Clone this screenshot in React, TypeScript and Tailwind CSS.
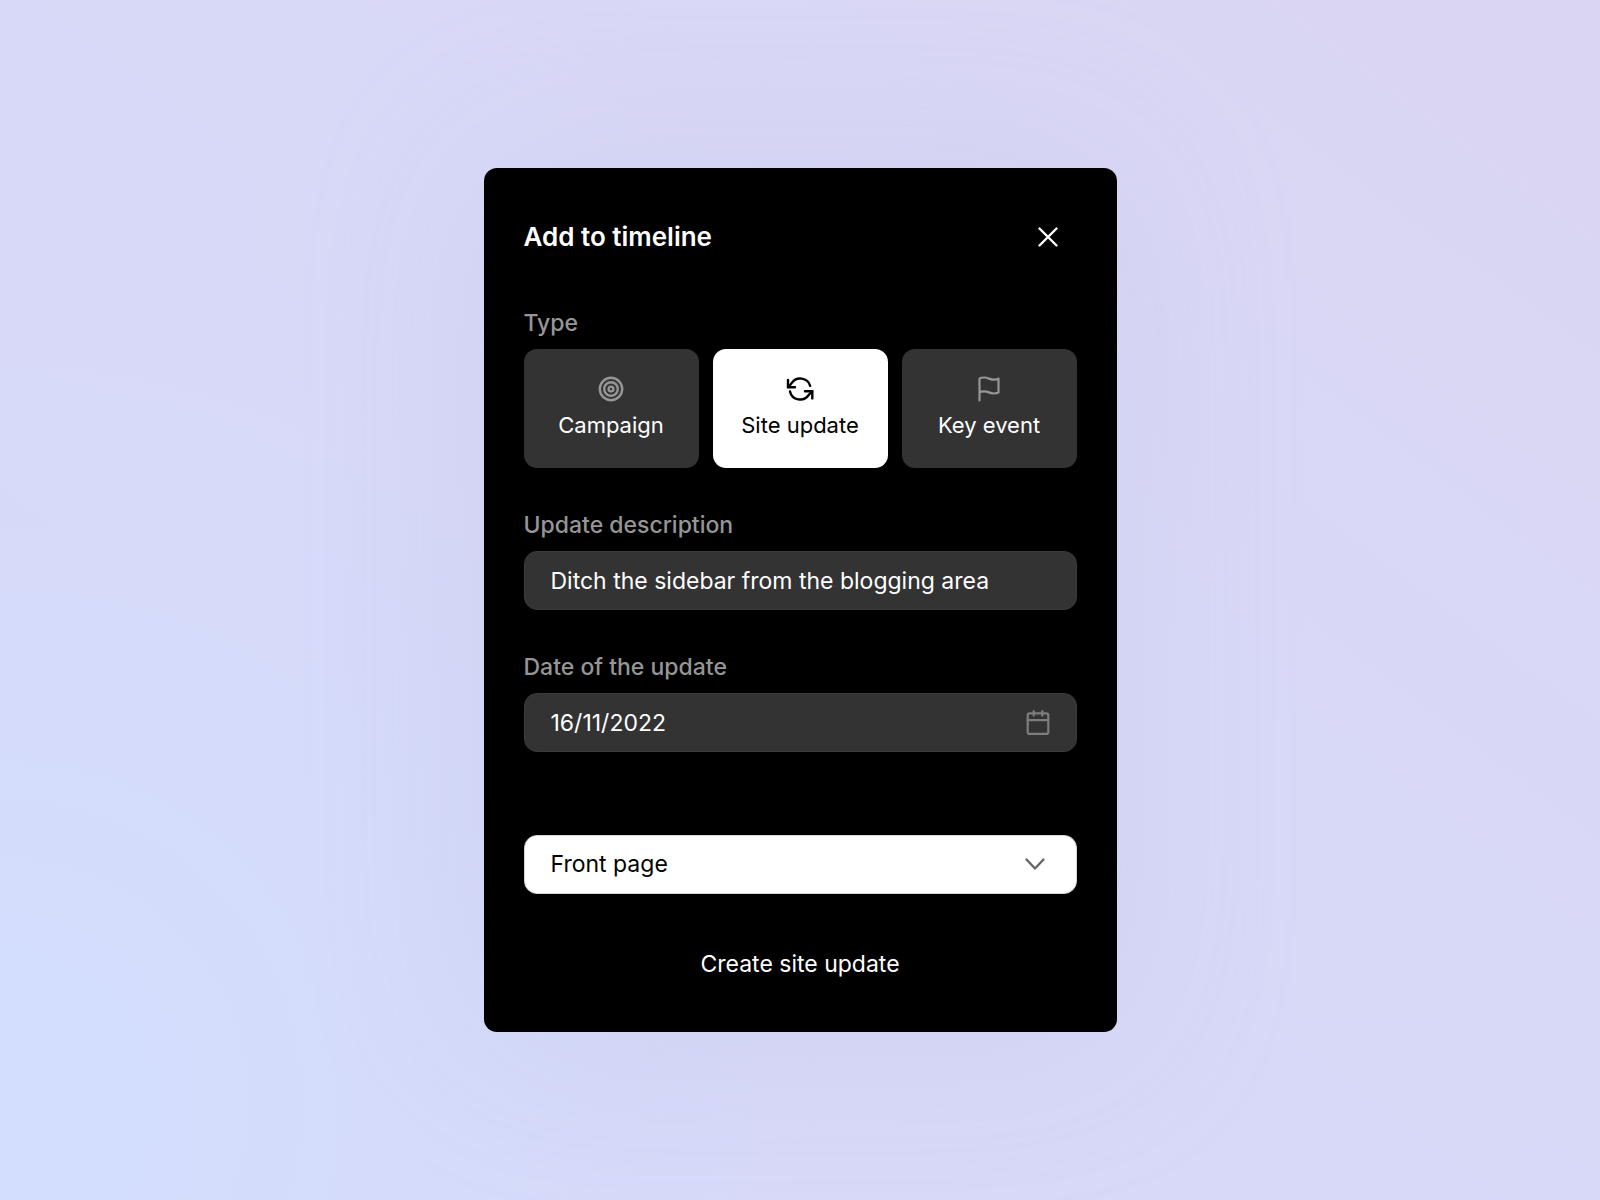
import React, { useState } from 'react';

type IconProps = { className?: string };

const stroke = {
  fill: 'none',
  stroke: 'currentColor',
  strokeLinecap: 'round' as const,
  strokeLinejoin: 'round' as const,
  'aria-hidden': true,
};

function TargetIcon({ className }: IconProps) {
  return (
    <svg viewBox="0 0 28 28" className={className} {...stroke} strokeWidth={2.4}>
      <circle cx="14" cy="14" r="11.2" />
      <circle cx="14" cy="14" r="6.8" />
      <circle cx="14" cy="14" r="2.4" />
    </svg>
  );
}

function RefreshIcon({ className }: IconProps) {
  return (
    <svg viewBox="0 0 28 28" className={className} {...stroke} strokeWidth={2.4}>
      <path d="M2 5v7.200h7" />
      <path d="M26.300 23.400v-7.200h-7.300" />
      <path d="M24.200 10.800A10.400 10.400 0 0 0 5.600 8.200L2 12.200" />
      <path d="M4 16.400a10.400 10.400 0 0 0 18.700 3.600l3.600-3.800" />
    </svg>
  );
}

function FlagIcon({ className }: IconProps) {
  return (
    <svg viewBox="0 0 28 28" className={className} {...stroke} strokeWidth={2.2}>
      <path d="M4.500 25.500V3.600s1.200-1.100 4.800-1.100 5.900 2.200 9.500 2.200 4.700-1.100 4.700-1.100v13.800s-1.100 1.100-4.700 1.100-5.900-2.200-9.500-2.200-4.800 1.100-4.800 1.100" />
    </svg>
  );
}

function CalendarIcon({ className }: IconProps) {
  return (
    <svg viewBox="0 0 28 28" className={className} {...stroke} strokeWidth={2.2}>
      <rect x="3.700" y="4.300" width="20.600" height="20.600" rx="2" />
      <path d="M3.700 11.200h20.600M9.700 2v4.600M18.300 2v4.600" />
    </svg>
  );
}

function CloseIcon({ className }: IconProps) {
  return (
    <svg viewBox="0 0 28 28" className={className} {...stroke} strokeWidth={2.4}>
      <path d="M5.500 5.500l17 17M22.500 5.500l-17 17" />
    </svg>
  );
}

function ChevronIcon({ className }: IconProps) {
  return (
    <svg viewBox="0 0 28 28" className={className} {...stroke} strokeWidth={2.4}>
      <path d="M5.500 8.500l8.500 9 8.500-9" />
    </svg>
  );
}

const types = [
  { id: 'campaign', label: 'Campaign', Icon: TargetIcon },
  { id: 'update', label: 'Site update', Icon: RefreshIcon },
  { id: 'event', label: 'Key event', Icon: FlagIcon },
];

const labelClass = 'text-[23px] leading-8 font-medium text-[#969696]';
const fieldClass =
  'h-[59px] w-full rounded-[13px] border border-[#3b3b3b] bg-[#333333] px-[26px] text-[23px] text-white outline-none';

export default function App() {
  const [selected, setSelected] = useState('update');
  const [description, setDescription] = useState('Ditch the sidebar from the blogging area');
  const [date, setDate] = useState('16/11/2022');

  return (
    <main className="flex min-h-screen items-center justify-center bg-[radial-gradient(circle_at_0%_92%,#d3defe,rgba(211,222,254,0)_42%),linear-gradient(to_top_right,#d7d9f8,#d8d9f7_60%,#dad5f1)] font-['Inter',sans-serif]">
      <form
        onSubmit={(e) => e.preventDefault()}
        className="flex w-full max-w-[633px] flex-col gap-[41px] rounded-[13px] bg-black px-10 pt-[49px] pb-[38px] shadow-[0_0_180px_rgba(180,185,220,0.24)]"
      >
        <header className="mb-[9px] flex h-10 items-center justify-between pr-[15px]">
          <h1 className="text-[26px] leading-10 font-semibold text-white">Add to timeline</h1>
          <button type="button" aria-label="Close" className="text-white">
            <CloseIcon className="size-7" />
          </button>
        </header>

        <div role="group" aria-labelledby="type-label" className="flex flex-col gap-[10px]">
          <span id="type-label" className={labelClass}>Type</span>
          <div className="grid grid-cols-3 gap-[14px]">
            {types.map(({ id, label, Icon }) => (
              <button
                key={id}
                type="button"
                aria-pressed={selected === id}
                onClick={() => setSelected(id)}
                className={
                  selected === id
                    ? 'flex h-[119px] flex-col items-center gap-[6px] rounded-[13px] bg-white pt-[26px] text-black'
                    : 'flex h-[119px] flex-col items-center gap-[6px] rounded-[13px] bg-[#333333] pt-[26px] text-white'
                }
              >
                <Icon className={selected === id ? 'size-7' : 'size-7 text-[#969696]'} />
                <span className="text-[22px] leading-8">{label}</span>
              </button>
            ))}
          </div>
        </div>

        <div className="flex flex-col gap-[10px]">
          <label htmlFor="description" className={labelClass}>Update description</label>
          <input
            id="description"
            type="text"
            value={description}
            onChange={(e) => setDescription(e.target.value)}
            className={fieldClass}
          />
        </div>

        <div className="flex flex-col gap-[10px]">
          <label htmlFor="date" className={labelClass}>Date of the update</label>
          <div className="relative">
            <input
              id="date"
              type="text"
              value={date}
              onChange={(e) => setDate(e.target.value)}
              className={fieldClass}
            />
            <button
              type="button"
              aria-label="Choose date"
              className="absolute inset-y-0 right-[25px] flex items-center text-[#7d7d7d]"
            >
              <CalendarIcon className="size-7" />
            </button>
          </div>
        </div>

        <div className="relative mt-[42px]">
          <select
            aria-label="Page"
            defaultValue="front"
            className="h-[59px] w-full appearance-none rounded-[13px] border border-[#d4d4d4] bg-white px-[26px] text-[23px] text-black outline-none"
          >
            <option value="front">Front page</option>
          </select>
          <span className="pointer-events-none absolute inset-y-0 right-7 flex items-center text-[#666666]">
            <ChevronIcon className="size-7" />
          </span>
        </div>

        <button type="submit" className="h-[59px] w-full rounded-[13px] text-[23px] text-white">
          Create site update
        </button>
      </form>
    </main>
  );
}
